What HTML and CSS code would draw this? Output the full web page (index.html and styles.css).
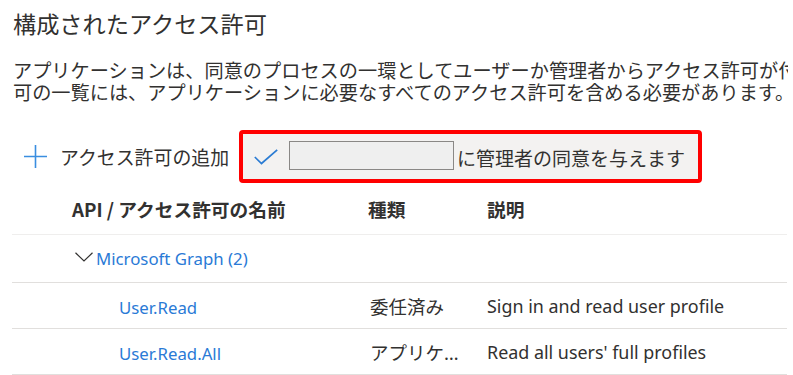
FILE: index.html
```html
<!DOCTYPE html>
<html lang="ja">
<head>
<meta charset="utf-8">
<title>構成されたアクセス許可</title>
<link rel="stylesheet" href="styles.css">
</head>
<body>
<div class="page">
  <h1 class="title">構成されたアクセス許可</h1>
  <div class="desc-wrap">
    <p class="desc"><span class="line">アプリケーションは、同意のプロセスの一環としてユーザーか管理者からアクセス許可が付与されると、API を呼び出す権限が与えられます。構成されたアクセス許</span><br><span class="line">可の一覧には、アプリケーションに必要なすべてのアクセス許可を含める必要があります。</span></p>
  </div>

  <div class="toolbar">
    <div class="add">
      <svg class="plus" width="23" height="23" viewBox="0 0 23 23"><path d="M11.5 0v23M0 11.5h23" stroke="#3a8ee0" stroke-width="1.6" fill="none"/></svg>
      <span>アクセス許可の追加</span>
    </div>
    <div class="consent">
      <svg class="check" width="24" height="16" viewBox="0 0 24 16"><polyline points="0.8,8 7.5,14.5 23.2,0.8" stroke="#2b7cd3" stroke-width="1.7" fill="none"/></svg>
      <span class="input"></span>
      <span class="consent-text">に管理者の同意を与えます</span>
    </div>
  </div>

  <div class="table">
    <div class="row head">
      <div class="c1">API / アクセス許可の名前</div>
      <div class="c2">種類</div>
      <div class="c3">説明</div>
    </div>
    <div class="row group">
      <div class="c1 grp"><svg class="chev" width="18" height="10" viewBox="0 0 18 10"><polyline points="0.5,0.8 9,9 17.5,0.8" stroke="#323130" stroke-width="1.2" fill="none"/></svg><span class="link">Microsoft Graph (2)</span></div>
    </div>
    <div class="row item">
      <div class="c1 perm"><span class="link">User.Read</span></div>
      <div class="c2"><span class="trunc">委任済み</span></div>
      <div class="c3 latin">Sign in and read user profile</div>
    </div>
    <div class="row item">
      <div class="c1 perm"><span class="link">User.Read.All</span></div>
      <div class="c2"><span class="trunc">アプリケーション</span></div>
      <div class="c3 latin">Read all users' full profiles</div>
    </div>
  </div>
</div>
</body>
</html>
```

FILE: styles.css
```css
html, body {
  margin: 0;
  padding: 0;
  background: #ffffff;
  overflow: hidden;
}

body {
  font-family: "Noto Sans", "Noto Sans CJK JP", sans-serif;
  color: #323130;
}

.page {
  padding: 0 0 0 12px;
  width: 781px;
}

.title {
  margin: 8px 0 0 1px;
  font-family: "Noto Sans CJK JP", sans-serif;
  font-size: 23.2px;
  font-weight: 400;
  line-height: 30px;
  white-space: nowrap;
}

.desc-wrap {
  margin-top: 21px;
  width: 776px;
  overflow: hidden;
}

.desc {
  margin: 0 0 0 1px;
  font-family: "Noto Sans CJK JP", sans-serif;
  font-size: 19.2px;
  line-height: 22px;
  white-space: nowrap;
}

.toolbar {
  margin-top: 27px;
  display: flex;
  align-items: center;
  height: 53px;
}

.add {
  display: flex;
  align-items: center;
  gap: 13px;
  padding-left: 12px;
  font-family: "Noto Sans CJK JP", sans-serif;
  font-size: 18.9px;
  color: #323130;
}

.plus {
  display: block;
}

.consent {
  margin-left: 10px;
  height: 45px;
  border: 4px solid #ff0000;
  border-radius: 4px;
  background: #f3f2f1;
  display: flex;
  align-items: center;
  padding: 0 13px 0 11px;
  font-family: "Noto Sans CJK JP", sans-serif;
  font-size: 19px;
}

.check {
  display: block;
}

.input {
  display: block;
  margin-left: 11px;
  width: 163px;
  height: 27px;
  border: 1px solid #8a8886;
  background: #efefef;
  margin-top: -2px;
}

.consent-text {
  margin-left: 3px;
  margin-top: 1px;
}

.table {
  width: 775px;
}

.row {
  display: flex;
  align-items: center;
  border-bottom: 1px solid #e1dfdd;
}

.row.head {
  height: 51px;
  border-bottom-color: #efeeed;
  font-family: "Noto Sans CJK JP", sans-serif;
  font-weight: 700;
  font-size: 18.7px;
}

.row.group {
  height: 47px;
}

.row.item {
  height: 45px;
  font-family: "Noto Sans CJK JP", sans-serif;
  font-size: 18.5px;
}

.c1 {
  width: 355px;
  padding-left: 60px;
  box-sizing: border-box;
  white-space: nowrap;
}

.c2 {
  width: 120px;
  padding-left: 1px;
  padding-right: 20px;
  box-sizing: border-box;
  white-space: nowrap;
  overflow: hidden;
}

.c3 {
  flex: 1;
  white-space: nowrap;
}

.grp {
  display: flex;
  align-items: center;
  padding-left: 63px;
}

.chev {
  display: block;
  margin-right: 3px;
  margin-top: -3px;
}

.perm {
  padding-left: 107px;
}

.link {
  color: #2a7ad6;
  font-family: "Noto Sans", sans-serif;
  font-size: 16.8px;
}

.latin {
  font-family: "Noto Sans", sans-serif;
  font-size: 17.9px;
  color: #323130;
}

.trunc {
  display: block;
  padding-left: 2px;
  overflow: hidden;
  text-overflow: ellipsis;
  white-space: nowrap;
  font-family: "Noto Sans", "Noto Sans CJK JP", sans-serif;
}
```
